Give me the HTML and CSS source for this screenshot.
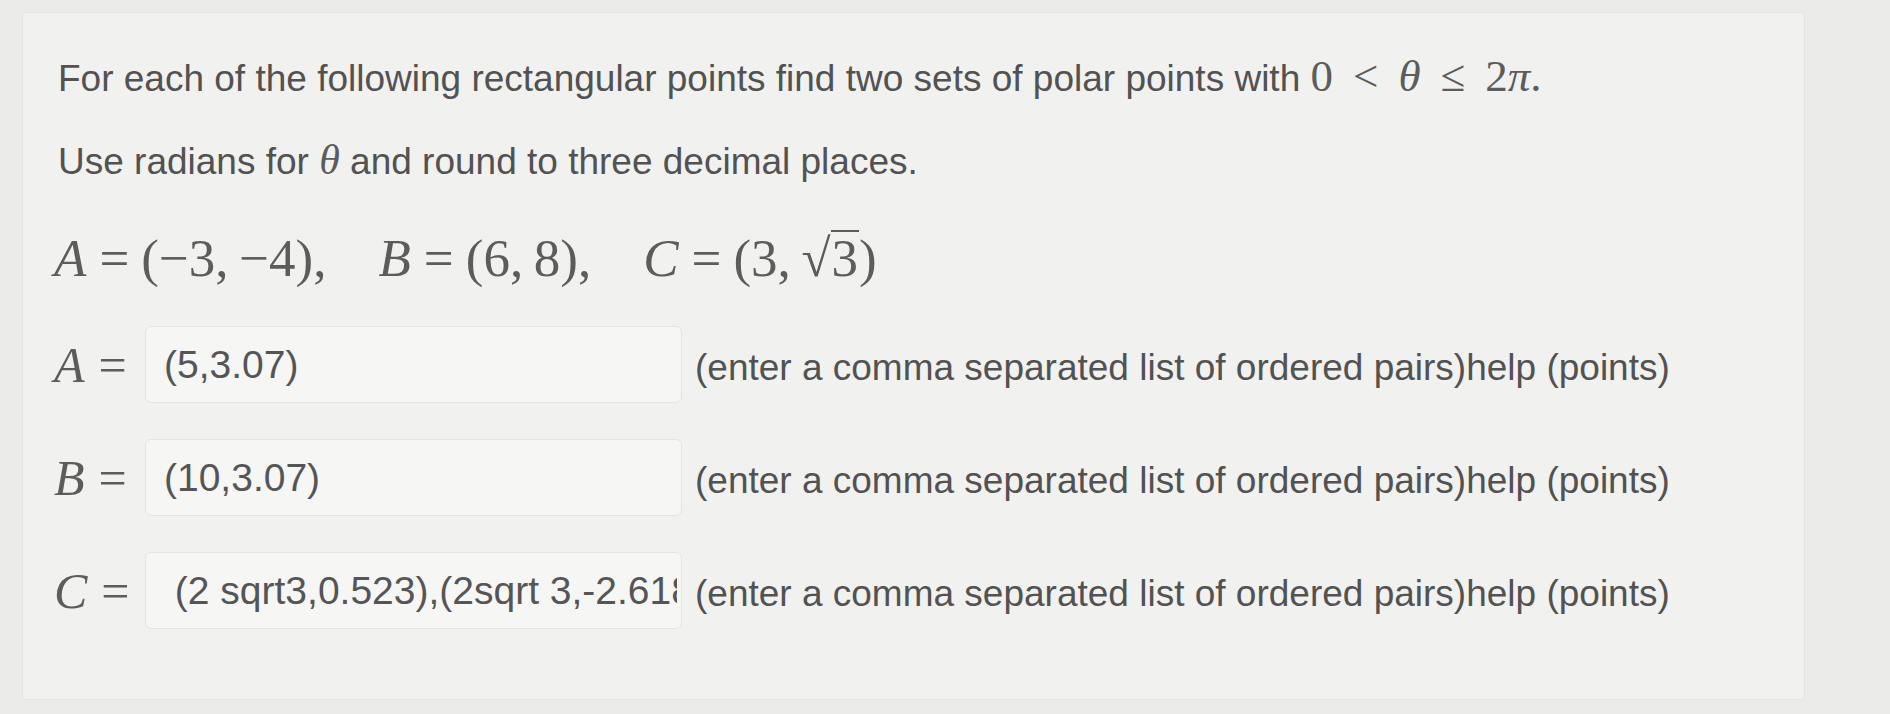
FILE: index.html
```html
<!DOCTYPE html>
<html lang="en">
<head>
<meta charset="utf-8">
<title>Polar points</title>
<link rel="stylesheet" href="styles.css">
</head>
<body>
<div class="page">
  <div class="card">
    <p class="line line1">For each of the following rectangular points find two sets of polar points with <span class="math inline-math"><span class="mn">0</span><span class="mo">&lt;</span><span class="mi">θ</span><span class="mo">≤</span><span class="mn">2</span><span class="mi">π</span><span class="mn">.</span></span></p>
    <p class="line line2">Use radians for <span class="math"><span class="mi">θ</span></span> and round to three decimal places.</p>
    <div class="math mathline">
      <span class="mi">A</span><span class="mo">=</span><span class="mn">(−3,&#8201;−4),</span>
      <span class="sep"></span>
      <span class="mi">B</span><span class="mo">=</span><span class="mn">(6,&#8201;8),</span>
      <span class="sep"></span>
      <span class="mi">C</span><span class="mo">=</span><span class="mn">(3,&#8201;<span class="sqrt">√<span class="radicand">3</span></span>)</span>
    </div>
    <div class="answer-row">
      <label class="math label"><span class="mi">A</span><span class="mo">=</span></label>
      <input class="answer" type="text" value="(5,3.07)">
      <span class="hint">(enter a comma separated list of ordered pairs)help (points)</span>
    </div>
    <div class="answer-row">
      <label class="math label"><span class="mi">B</span><span class="mo">=</span></label>
      <input class="answer" type="text" value="(10,3.07)">
      <span class="hint">(enter a comma separated list of ordered pairs)help (points)</span>
    </div>
    <div class="answer-row">
      <label class="math label"><span class="mi">C</span><span class="mo">=</span></label>
      <input class="answer" type="text" value=" (2 sqrt3,0.523),(2sqrt 3,-2.618)">
      <span class="hint">(enter a comma separated list of ordered pairs)help (points)</span>
    </div>
  </div>
</div>
</body>
</html>
```

FILE: styles.css
```css
html, body {
  margin: 0;
  padding: 0;
  background: #ebebe9;
}

.page {
  padding: 12px 85px 14px 22px;
}

.card {
  background: #f1f1ef;
  border: 1px solid #e4e4e2;
  border-radius: 4px;
  height: 688px;
  box-sizing: border-box;
  padding: 41px 0 0 35px;
  display: flex;
  flex-direction: column;
  font-family: "Liberation Sans", Arial, sans-serif;
  font-size: 37px;
  color: #525252;
}

.line {
  margin: 0;
  line-height: 44px;
  white-space: nowrap;
}

.line2 {
  margin-top: 37px;
}

.math {
  font-family: "Liberation Serif", "DejaVu Serif", serif;
  color: #5c5c5c;
}

.mi {
  font-style: italic;
}

.inline-math {
  font-size: 45px;
}

.inline-math .mo {
  margin: 0 20px;
}

.line2 .math {
  font-size: 42px;
}

.mathline {
  margin-top: 42px;
  height: 64px;
  display: flex;
  align-items: center;
  font-size: 53px;
  white-space: nowrap;
  margin-left: -4px;
}

.mathline .mo {
  margin: 0 12px 0 13px;
}

.mathline .sep {
  width: 52px;
}

.sqrt {
  display: inline-block;
}

.radicand {
  display: inline-block;
  border-top: 2px solid #5c5c5c;
  line-height: 1.0;
  padding: 0 1px;
}

.answer-row {
  display: flex;
  align-items: center;
  height: 77px;
  margin-top: 36px;
  white-space: nowrap;
}

.answer-row:first-of-type {
  margin-top: 30px;
}

.label {
  width: 91px;
  margin-left: -4px;
  font-size: 50px;
  flex: none;
}

.label .mo {
  margin-left: 14px;
}

.answer {
  flex: none;
  box-sizing: border-box;
  width: 537px;
  height: 77px;
  padding: 0 4px 0 18px;
  margin: 0;
  background: #f6f6f5;
  border: 1px solid #e4e4e2;
  border-radius: 6px;
  font-family: "Liberation Sans", Arial, sans-serif;
  font-size: 39px;
  color: #555555;
  outline: none;
}

.hint {
  margin-left: 13px;
  padding-top: 6px;
}
```
